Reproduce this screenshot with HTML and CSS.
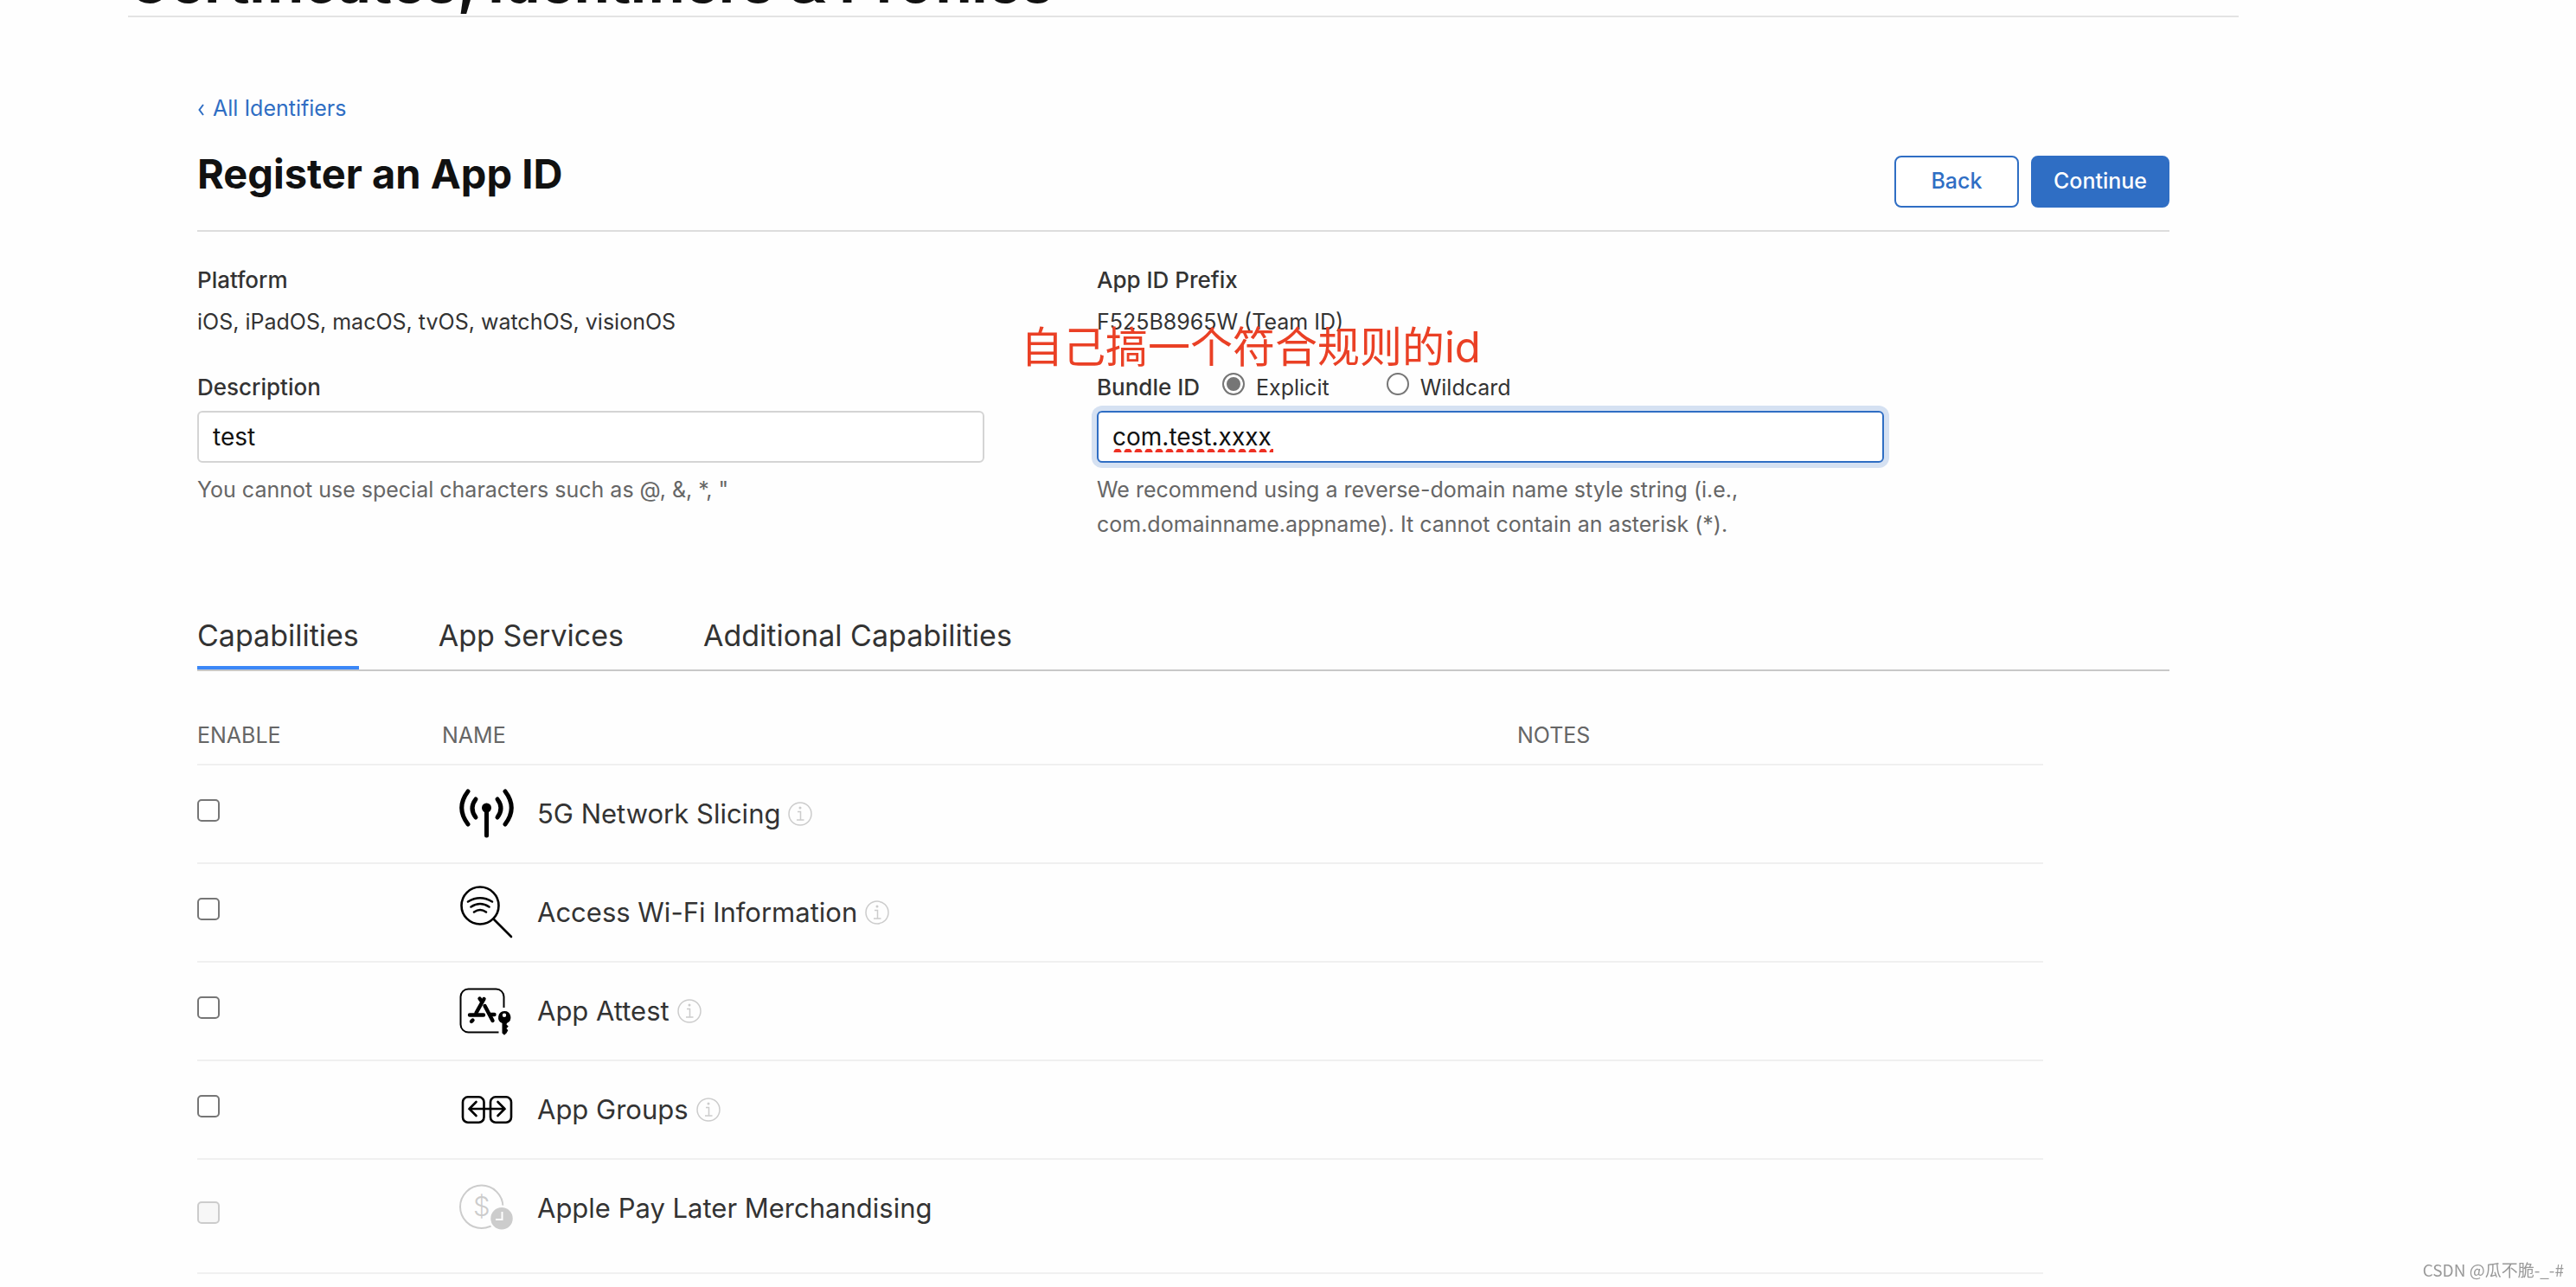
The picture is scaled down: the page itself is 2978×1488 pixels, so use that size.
FILE: index.html
```
<!DOCTYPE html>
<html lang="en">

<head>
    <meta charset="UTF-8" />
    <meta name="viewport" content="width=device-width, initial-scale=1" />
    <title>Register an App ID</title>
    <link rel="stylesheet" href="styles.css">
</head>

<body>

    <!-- Info icon, shared by the capability rows -->
    <svg class="sprite" aria-hidden="true">
        <symbol id="info" viewBox="0 0 30 30">
            <circle cx="15" cy="15" r="13" />
            <path d="M12 12.5h3.5V22M11 22h8.5" />
            <circle class="info-dot" cx="15" cy="8" r="1.5" />
        </symbol>
    </svg>

    <div class="page">
        <!-- Header -->
        <header class="page-header">
            <h1>Certificates, Identifiers &amp; Profiles</h1>
        </header>

        <main class="main-content">
            <a class="back-link" href="#"><svg class="chevron" viewBox="0 0 9 16" aria-hidden="true"><path d="M7 2 2.500 8 7 14" /></svg>All Identifiers</a>

            <div class="title-row">
                <h2>Register an App ID</h2>
                <div class="title-buttons">
                    <button type="button" class="btn">Back</button>
                    <button type="button" class="btn btn-primary">Continue</button>
                </div>
            </div>

            <!-- App ID form -->
            <form class="form-grid">
                <div class="info-block">
                    <h3>Platform</h3>
                    <p>iOS, iPadOS, macOS, tvOS, watchOS, visionOS</p>
                </div>
                <div class="info-block">
                    <h3>App ID Prefix</h3>
                    <p>F525B8965W (Team ID)</p>
                    <span class="annotation" lang="zh-CN">自己搞一个符合规则的id</span>
                </div>

                <div class="field">
                    <div class="field-label">
                        <label class="label-strong" for="description">Description</label>
                    </div>
                    <input type="text" id="description" class="text-input" value="test" />
                    <p class="help">You cannot use special characters such as @, &amp;, *, "</p>
                </div>
                <div class="field">
                    <div class="field-label">
                        <label class="label-strong" for="bundle">Bundle ID</label>
                        <input type="radio" id="explicit" name="bundleType" class="radio" checked />
                        <label class="radio-label" for="explicit">Explicit</label>
                        <input type="radio" id="wildcard" name="bundleType" class="radio" />
                        <label class="radio-label" for="wildcard">Wildcard</label>
                    </div>
                    <div class="input-wrap">
                        <input type="text" id="bundle" class="text-input active" value="com.test.xxxx" />
                        <span class="spell-mark"></span>
                    </div>
                    <p class="help">We recommend using a reverse-domain name style string (i.e., com.domainname.appname). It cannot contain an asterisk (*).</p>
                </div>
            </form>

            <!-- Tabs -->
            <nav class="tabs">
                <a class="tab selected" href="#">Capabilities</a>
                <a class="tab" href="#">App Services</a>
                <a class="tab" href="#">Additional Capabilities</a>
            </nav>

            <!-- Capability list -->
            <table class="capabilities">
                <thead>
                    <tr>
                        <th class="col-enable">ENABLE</th>
                        <th class="col-name">NAME</th>
                        <th>NOTES</th>
                    </tr>
                </thead>
                <tbody>
                    <tr>
                        <td class="cell-enable"><input type="checkbox" id="cap-5g" class="checkbox" /></td>
                        <td class="cell-name">
                            <div class="capability">
                                <svg class="cap-icon" viewBox="0 0 66 66" aria-hidden="true">
                                    <g class="stroke-heavy">
                                        <path d="M33.500 26V58" />
                                        <path d="M21 16Q13 26.500 21 37M46 16Q54 26.500 46 37" />
                                        <path d="M12 7Q-2.500 26 12 45M55 7Q69.500 26 55 45" />
                                    </g>
                                    <circle cx="33.500" cy="26" r="5.500" />
                                </svg>
                                <label for="cap-5g">5G Network Slicing</label>
                                <svg class="info-icon"><use href="#info" /></svg>
                            </div>
                        </td>
                        <td></td>
                    </tr>
                    <tr>
                        <td class="cell-enable"><input type="checkbox" id="cap-wifi" class="checkbox" /></td>
                        <td class="cell-name">
                            <div class="capability">
                                <svg class="cap-icon" viewBox="0 0 66 66" aria-hidden="true">
                                    <g class="stroke">
                                        <circle cx="26" cy="25" r="21.500" />
                                        <path d="M41.500 40.500 62 61" />
                                        <path d="M12 20.500Q26 12 40 20.500M15.500 26.500Q26 19.500 36.500 26.500M19 32.500Q26 27.500 33 32.500" />
                                    </g>
                                </svg>
                                <label for="cap-wifi">Access Wi-Fi Information</label>
                                <svg class="info-icon"><use href="#info" /></svg>
                            </div>
                        </td>
                        <td></td>
                    </tr>
                    <tr>
                        <td class="cell-enable"><input type="checkbox" id="cap-attest" class="checkbox" /></td>
                        <td class="cell-name">
                            <div class="capability">
                                <svg class="cap-icon" viewBox="0 0 66 66" aria-hidden="true">
                                    <path class="stroke-thin" d="M53.500 29V16.500a9 9 0 0 0-9-9H12.500a9 9 0 0 0-9 9V48.500a9 9 0 0 0 9 9H47.500" />
                                    <g class="stroke-mark">
                                        <path d="M30.500 19 21.500 35" />
                                        <path d="M25.500 18.500 28 22M31.500 27 40.500 44" />
                                        <path d="M14 37.500H30M38 37H42.500M17.500 43.500 16 45" />
                                    </g>
                                    <path fill-rule="evenodd" d="M54 33a7.300 7.300 0 0 1 3 14l-.5 1.500 2.300 2.300-2.300 2.200 1.800 2.300-1.800 3.200-2.500 2.300-2.500-2.300V47A7.300 7.300 0 0 1 54 33ZM54 35.600a2.200 2.200 0 1 0 0 4.400 2.200 2.200 0 0 0 0-4.400Z" />
                                </svg>
                                <label for="cap-attest">App Attest</label>
                                <svg class="info-icon"><use href="#info" /></svg>
                            </div>
                        </td>
                        <td></td>
                    </tr>
                    <tr>
                        <td class="cell-enable"><input type="checkbox" id="cap-groups" class="checkbox" /></td>
                        <td class="cell-name">
                            <div class="capability">
                                <svg class="cap-icon" viewBox="0 0 66 66" aria-hidden="true">
                                    <g class="stroke">
                                        <rect x="6" y="18.300" width="24.500" height="29.500" rx="6" />
                                        <rect x="38" y="18.300" width="24" height="29.500" rx="6" />
                                        <path d="M13.500 32H54.500M21.500 24 13.500 32 21.500 40M46.500 24 54.500 32 46.500 40" />
                                    </g>
                                </svg>
                                <label for="cap-groups">App Groups</label>
                                <svg class="info-icon"><use href="#info" /></svg>
                            </div>
                        </td>
                        <td></td>
                    </tr>
                    <tr class="row-disabled">
                        <td class="cell-enable"><input type="checkbox" id="cap-paylater" class="checkbox" disabled /></td>
                        <td class="cell-name">
                            <div class="capability">
                                <svg class="cap-icon" viewBox="0 0 66 66" aria-hidden="true">
                                    <circle class="coin" cx="27.700" cy="31.300" r="24.700" />
                                    <text class="dollar" x="27.700" y="42">$</text>
                                    <circle class="clock" cx="51" cy="44.700" r="14" />
                                    <path class="hands" d="M51.500 37V46H44" />
                                </svg>
                                <label for="cap-paylater">Apple Pay Later Merchandising</label>
                            </div>
                        </td>
                        <td></td>
                    </tr>
                </tbody>
            </table>
        </main>
    </div>

    <div class="watermark" lang="zh-CN">CSDN @瓜不脆-_-#</div>

</body>

</html>
```

FILE: styles.css
```
* {
    margin: 0;
    padding: 0;
    box-sizing: border-box;
}

body {
    background-color: #fefefe;
    color: #333;
    font-family: Inter, "Noto Sans CJK SC", sans-serif;
    font-size: 25px;
    line-height: 40px;
}

a {
    text-decoration: none;
}

.sprite {
    position: absolute;
    width: 0;
    height: 0;
}

.page {
    margin: 0 390px 0 148px;
}

/* Header */
.page-header {
    display: flex;
    align-items: flex-end;
    height: 20px;
    overflow: hidden;
    border-bottom: 2px solid #e3e3e3;
}

.page-header h1 {
    color: #111;
    font-size: 66px;
    font-weight: 700;
    line-height: 78px;
    white-space: nowrap;
}

.main-content {
    padding: 85px 80px 0;
}

.back-link {
    display: flex;
    align-items: center;
    color: #2f6ec4;
}

.chevron {
    width: 9px;
    height: 16px;
    margin: 4px 9px 0 0;
    fill: none;
    stroke: #2f6ec4;
    stroke-width: 2;
}

/* Title row */
.title-row {
    display: flex;
    justify-content: space-between;
    margin-top: 26px;
    padding-bottom: 26px;
    border-bottom: 2px solid #ddd;
}

.title-row h2 {
    color: #111;
    font-size: 47px;
    font-weight: 700;
    line-height: 60px;
}

.title-buttons {
    display: flex;
    gap: 14px;
    margin-top: 9px;
}

.btn {
    height: 60px;
    min-width: 144px;
    padding: 0 24px 2px;
    border: 2px solid #2f6ec4;
    border-radius: 8px;
    background-color: #fff;
    color: #2f6ec4;
    font-family: inherit;
    font-size: 25px;
    font-weight: 500;
    cursor: pointer;
}

.btn-primary {
    background-color: #2f6ec4;
    color: #fff;
}

/* Form */
.form-grid {
    display: grid;
    grid-template-columns: 1fr 1fr;
    column-gap: 130px;
    row-gap: 36px;
    padding: 36px 330px 0 0;
}

.info-block {
    position: relative;
}

.info-block h3 {
    margin-bottom: 8px;
    font-size: 26px;
    font-weight: 500;
}

.annotation {
    position: absolute;
    top: 62px;
    left: -88px;
    color: #ea4025;
    font-size: 49px;
    line-height: 72px;
    white-space: nowrap;
}

.field-label {
    display: flex;
    align-items: center;
    margin-bottom: 7px;
}

.label-strong {
    font-size: 26px;
    font-weight: 500;
}

.radio {
    appearance: none;
    width: 26px;
    height: 26px;
    margin: 0 13px 8px 26px;
    border: 2px solid #767676;
    border-radius: 50%;
    background-color: #fff;
}

.radio:checked {
    background-color: #767676;
    box-shadow: inset 0 0 0 3px #fff;
}

.radio-label + .radio {
    margin-left: 66px;
}

.text-input {
    display: block;
    width: 100%;
    height: 60px;
    padding: 0 16px;
    border: 2px solid #d4d4d4;
    border-radius: 6px;
    background-color: #fff;
    color: #111;
    font-family: inherit;
    font-size: 28px;
}

.text-input.active {
    border-color: #2f6ec4;
    box-shadow: 0 0 0 6px #d5e1f2;
    outline: none;
}

.input-wrap {
    position: relative;
}

/* Dotted red line under the misspelt value */
.spell-mark {
    position: absolute;
    left: 18px;
    bottom: 12px;
    width: 186px;
    height: 4px;
    background: radial-gradient(circle at 6px 4px, #ee3124 4px, transparent 5px) 0 0 / 12px 4px;
}

.help {
    max-width: 800px;
    margin-top: 11px;
    color: #666;
}

/* Tabs */
.tabs {
    display: flex;
    gap: 92px;
    margin-top: 84px;
    border-bottom: 2px solid #c8c8c8;
}

.tab {
    padding-bottom: 10px;
    border-bottom: 4px solid transparent;
    color: #333;
    font-size: 34px;
    line-height: 50px;
}

.tab.selected {
    border-bottom-color: #3b87f7;
}

/* Capability table */
.capabilities {
    width: calc(100% - 146px);
    margin-top: 54px;
    border-collapse: separate;
    border-spacing: 0;
    table-layout: fixed;
}

.capabilities th {
    padding-bottom: 13px;
    border-bottom: 2px solid #f0f0f0;
    color: #666;
    font-weight: 400;
    text-align: left;
}

.capabilities td {
    border-bottom: 2px solid #f0f0f0;
}

.col-enable {
    width: 283px;
}

.col-name {
    width: 1243px;
}

.cell-enable {
    padding-bottom: 8px;
    vertical-align: middle;
}

.cell-name {
    padding: 23px 0 23px 18px;
    vertical-align: top;
}

.row-disabled .cell-name {
    padding-bottom: 41px;
}

.checkbox {
    appearance: none;
    display: block;
    width: 26px;
    height: 26px;
    border: 2px solid #767676;
    border-radius: 5px;
    background-color: #fff;
}

.checkbox:disabled {
    border-color: #ccc;
    background-color: #f7f7f7;
}

.capability {
    display: flex;
    align-items: center;
    font-size: 31px;
}

.cap-icon {
    width: 66px;
    height: 66px;
    margin-right: 26px;
}

.stroke,
.stroke-thin,
.stroke-heavy,
.stroke-mark {
    fill: none;
    stroke: #000;
    stroke-width: 2.6;
    stroke-linecap: round;
}

.stroke-thin {
    stroke-width: 2;
    stroke-linecap: butt;
}

.stroke-heavy {
    stroke-width: 5;
}

.stroke-mark {
    stroke-width: 4.4;
}

.coin {
    fill: none;
    stroke: #ccc;
    stroke-width: 2;
}

.dollar {
    fill: #ccc;
    font-size: 31px;
    font-weight: 300;
    text-anchor: middle;
}

.clock {
    fill: #ccc;
    stroke: #fefefe;
    stroke-width: 2.5;
}

.hands {
    fill: none;
    stroke: #fefefe;
    stroke-width: 2;
}

.info-icon {
    width: 30px;
    height: 30px;
    margin-left: 8px;
    fill: none;
    stroke: #ccc;
    stroke-width: 1.5;
}

.info-dot {
    fill: #ccc;
    stroke: none;
}

/* Watermark */
.watermark {
    position: fixed;
    right: 14px;
    bottom: 6px;
    color: #999;
    font-family: "Noto Sans CJK SC", sans-serif;
    font-size: 19px;
    line-height: 28px;
}
```
